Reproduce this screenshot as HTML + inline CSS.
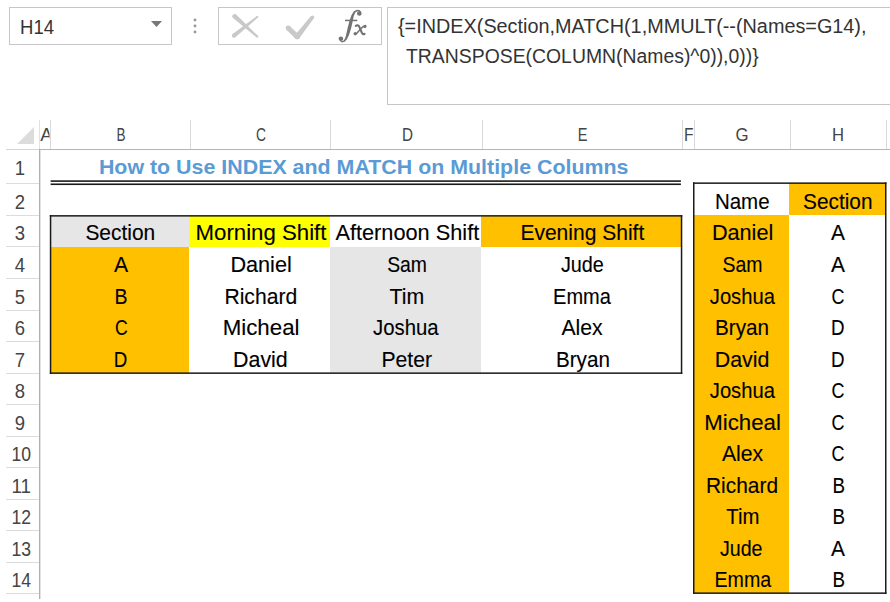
<!DOCTYPE html><html><head><meta charset="utf-8"><style>html,body{margin:0;padding:0;background:#fff;width:890px;height:602px;overflow:hidden}svg{display:block}text{font-family:"Liberation Sans",sans-serif}</style></head><body>
<svg width="890" height="602" viewBox="0 0 890 602">
<rect x="0" y="0" width="890" height="602" fill="#fff"/>
<rect x="9" y="7" width="163" height="1" fill="#c6c6c6" shape-rendering="crispEdges"/>
<rect x="9" y="44" width="163" height="1" fill="#c6c6c6" shape-rendering="crispEdges"/>
<rect x="9" y="7" width="1" height="38" fill="#c6c6c6" shape-rendering="crispEdges"/>
<rect x="171" y="7" width="1" height="38" fill="#c6c6c6" shape-rendering="crispEdges"/>
<text x="20.00" y="33.5" font-size="20" fill="#333" textLength="33.99" lengthAdjust="spacingAndGlyphs" >H14</text>
<path d="M151 21 L162 21 L156.5 27 Z" fill="#777"/>
<circle cx="195" cy="20" r="1.45" fill="#9a9a9a"/>
<circle cx="195" cy="26" r="1.45" fill="#9a9a9a"/>
<circle cx="195" cy="32" r="1.45" fill="#9a9a9a"/>
<rect x="218" y="7" width="164" height="1" fill="#c6c6c6" shape-rendering="crispEdges"/>
<rect x="218" y="44" width="164" height="1" fill="#c6c6c6" shape-rendering="crispEdges"/>
<rect x="218" y="7" width="1" height="38" fill="#c6c6c6" shape-rendering="crispEdges"/>
<rect x="381" y="7" width="1" height="38" fill="#c6c6c6" shape-rendering="crispEdges"/>
<path d="M233.06 17.91 L256.46 37.42 L257.94 35.78 L236.14 14.49 Z" fill="#c9c9c9"/>
<circle cx="234.6" cy="16.2" r="2.3" fill="#c9c9c9"/><circle cx="257.2" cy="36.6" r="1.1" fill="#c9c9c9"/>
<path d="M256.84 16.10 L232.62 33.88 L235.38 37.32 L257.96 17.50 Z" fill="#c9c9c9"/>
<circle cx="257.4" cy="16.8" r="0.9" fill="#c9c9c9"/><circle cx="234.0" cy="35.6" r="2.2" fill="#c9c9c9"/>
<path d="M286.47 29.81 L295.33 38.55 L299.07 34.65 L289.93 26.19 Z" fill="#c9c9c9"/>
<circle cx="288.2" cy="28.0" r="2.5" fill="#c9c9c9"/><circle cx="297.2" cy="36.6" r="2.7" fill="#c9c9c9"/>
<path d="M299.33 38.27 L313.82 18.31 L310.98 16.09 L295.07 34.93 Z" fill="#c9c9c9"/>
<circle cx="297.2" cy="36.6" r="2.7" fill="#c9c9c9"/><circle cx="312.4" cy="17.2" r="1.8" fill="#c9c9c9"/>
<path d="M361.05 11.80 L359.51 9.97 L356.80 9.63 L353.87 11.19 L351.43 15.17 L349.45 21.10 L347.75 27.58 L346.41 33.58 L345.26 38.03 L343.71 40.57 L342.04 41.15 L340.90 40.48 L340.30 41.52 L341.96 42.45 L344.69 41.83 L347.14 38.97 L349.19 34.42 L351.05 28.42 L352.55 21.90 L353.77 16.03 L355.33 12.41 L357.20 11.17 L358.89 11.23 L360.15 12.60 Z" fill="#737373"/>
<circle cx="359.3" cy="13.4" r="2.3" fill="#737373"/>
<circle cx="340.9" cy="38.7" r="2.3" fill="#737373"/>
<rect x="345" y="19.7" width="12.3" height="1.5" fill="#737373"/>
<path d="M355.8 25.8 C357.6 24.6 358.9 25.6 359.8 27.8 L361.8 32.6 C362.4 34 363.4 34.6 364.6 33.8" stroke="#737373" stroke-width="2.1" fill="none" stroke-linecap="round"/>
<path d="M365.6 25.6 C363.4 26 361 28.5 359.2 30.6 L356.6 33.4 C355.8 34.3 355 34.6 354.6 34.4" stroke="#737373" stroke-width="1.5" fill="none" stroke-linecap="round"/>
<circle cx="365" cy="26.4" r="1.5" fill="#737373"/>
<circle cx="355.2" cy="33.6" r="1.6" fill="#737373"/>
<rect x="387" y="7" width="503" height="1" fill="#c6c6c6" shape-rendering="crispEdges"/>
<rect x="387" y="104" width="503" height="1" fill="#c6c6c6" shape-rendering="crispEdges"/>
<rect x="387" y="7" width="1" height="98" fill="#c6c6c6" shape-rendering="crispEdges"/>
<text x="398.00" y="33" font-size="20" fill="#333" textLength="468.49" lengthAdjust="spacingAndGlyphs" >{=INDEX(Section,MATCH(1,MMULT(--(Names=G14),</text>
<text x="406.00" y="63.3" font-size="20" fill="#333" textLength="352.68" lengthAdjust="spacingAndGlyphs" >TRANSPOSE(COLUMN(Names)^0)),0))}</text>
<rect x="6" y="149" width="884" height="1" fill="#b4b4b4" shape-rendering="crispEdges"/>
<rect x="6" y="149" width="33" height="1" fill="#d4d4d4" shape-rendering="crispEdges"/>
<rect x="39" y="120" width="1" height="479" fill="#b0b0b0" shape-rendering="crispEdges"/>
<rect x="40" y="150" width="1" height="449" fill="#e2e2e2" shape-rendering="crispEdges"/>
<rect x="50" y="120" width="1" height="29" fill="#dadada" shape-rendering="crispEdges"/>
<rect x="190" y="120" width="1" height="29" fill="#dadada" shape-rendering="crispEdges"/>
<rect x="330" y="120" width="1" height="29" fill="#dadada" shape-rendering="crispEdges"/>
<rect x="482" y="120" width="1" height="29" fill="#dadada" shape-rendering="crispEdges"/>
<rect x="682" y="120" width="1" height="29" fill="#dadada" shape-rendering="crispEdges"/>
<rect x="694" y="120" width="1" height="29" fill="#dadada" shape-rendering="crispEdges"/>
<rect x="790" y="120" width="1" height="29" fill="#dadada" shape-rendering="crispEdges"/>
<rect x="886" y="120" width="1" height="29" fill="#dadada" shape-rendering="crispEdges"/>
<rect x="39" y="120" width="1" height="29" fill="#e0e0e0" shape-rendering="crispEdges"/>
<path d="M34 127 L34 144 L17 144 Z" fill="#dcdcdc"/>
<clipPath id="ca"><rect x="40" y="118" width="9.5" height="31"/></clipPath>
<clipPath id="cf"><rect x="683" y="118" width="11" height="31"/></clipPath>
<text x="40.30" y="141.4" font-size="19" fill="#444" textLength="12.35" lengthAdjust="spacingAndGlyphs" clip-path="url(#ca)">A</text>
<text x="116.50" y="141" font-size="19" fill="#444" textLength="9.03" lengthAdjust="spacingAndGlyphs" >B</text>
<text x="256.00" y="141" font-size="19" fill="#444" textLength="10.03" lengthAdjust="spacingAndGlyphs" >C</text>
<text x="402.00" y="141" font-size="19" fill="#444" textLength="11.03" lengthAdjust="spacingAndGlyphs" >D</text>
<text x="577.70" y="141" font-size="19" fill="#444" textLength="9.73" lengthAdjust="spacingAndGlyphs" >E</text>
<text x="735.50" y="141" font-size="19" fill="#444" textLength="13.06" lengthAdjust="spacingAndGlyphs" >G</text>
<text x="832.00" y="141" font-size="19" fill="#444" textLength="12.04" lengthAdjust="spacingAndGlyphs" >H</text>
<text x="684.00" y="141" font-size="19" fill="#444" textLength="9.51" lengthAdjust="spacingAndGlyphs" clip-path="url(#cf)">F</text>
<rect x="6" y="183" width="33" height="1" fill="#dcdcdc" shape-rendering="crispEdges"/>
<text x="14.66" y="174.5" font-size="19.5" fill="#444" textLength="10.30" lengthAdjust="spacingAndGlyphs" >1</text>
<rect x="6" y="215" width="33" height="1" fill="#dcdcdc" shape-rendering="crispEdges"/>
<text x="14.66" y="208.5" font-size="19.5" fill="#444" textLength="10.30" lengthAdjust="spacingAndGlyphs" >2</text>
<rect x="6" y="246" width="33" height="1" fill="#dcdcdc" shape-rendering="crispEdges"/>
<text x="14.66" y="240.0" font-size="19.5" fill="#444" textLength="10.30" lengthAdjust="spacingAndGlyphs" >3</text>
<rect x="6" y="278" width="33" height="1" fill="#dcdcdc" shape-rendering="crispEdges"/>
<text x="14.66" y="271.5" font-size="19.5" fill="#444" textLength="10.30" lengthAdjust="spacingAndGlyphs" >4</text>
<rect x="6" y="310" width="33" height="1" fill="#dcdcdc" shape-rendering="crispEdges"/>
<text x="14.66" y="303.5" font-size="19.5" fill="#444" textLength="10.30" lengthAdjust="spacingAndGlyphs" >5</text>
<rect x="6" y="341" width="33" height="1" fill="#dcdcdc" shape-rendering="crispEdges"/>
<text x="14.66" y="334.5" font-size="19.5" fill="#444" textLength="10.30" lengthAdjust="spacingAndGlyphs" >6</text>
<rect x="6" y="373" width="33" height="1" fill="#dcdcdc" shape-rendering="crispEdges"/>
<text x="14.66" y="366.5" font-size="19.5" fill="#444" textLength="10.30" lengthAdjust="spacingAndGlyphs" >7</text>
<rect x="6" y="404" width="33" height="1" fill="#dcdcdc" shape-rendering="crispEdges"/>
<text x="14.66" y="398.0" font-size="19.5" fill="#444" textLength="10.30" lengthAdjust="spacingAndGlyphs" >8</text>
<rect x="6" y="436" width="33" height="1" fill="#dcdcdc" shape-rendering="crispEdges"/>
<text x="14.66" y="429.5" font-size="19.5" fill="#444" textLength="10.30" lengthAdjust="spacingAndGlyphs" >9</text>
<rect x="6" y="467" width="33" height="1" fill="#dcdcdc" shape-rendering="crispEdges"/>
<text x="11.40" y="461.0" font-size="19.5" fill="#444" textLength="19.54" lengthAdjust="spacingAndGlyphs" >10</text>
<rect x="6" y="499" width="33" height="1" fill="#dcdcdc" shape-rendering="crispEdges"/>
<text x="11.40" y="492.5" font-size="19.5" fill="#444" textLength="19.46" lengthAdjust="spacingAndGlyphs" >11</text>
<rect x="6" y="530" width="33" height="1" fill="#dcdcdc" shape-rendering="crispEdges"/>
<text x="11.40" y="524.0" font-size="19.5" fill="#444" textLength="19.54" lengthAdjust="spacingAndGlyphs" >12</text>
<rect x="6" y="562" width="33" height="1" fill="#dcdcdc" shape-rendering="crispEdges"/>
<text x="11.40" y="555.5" font-size="19.5" fill="#444" textLength="19.54" lengthAdjust="spacingAndGlyphs" >13</text>
<rect x="6" y="593" width="33" height="1" fill="#dcdcdc" shape-rendering="crispEdges"/>
<text x="11.40" y="587.0" font-size="19.5" fill="#444" textLength="19.54" lengthAdjust="spacingAndGlyphs" >14</text>
<rect x="51" y="216" width="138" height="30.5" fill="#e6e6e6" shape-rendering="crispEdges"/>
<rect x="189" y="216" width="141" height="30.5" fill="#ffff00" shape-rendering="crispEdges"/>
<rect x="481" y="216" width="200" height="30.5" fill="#ffc000" shape-rendering="crispEdges"/>
<rect x="51" y="246.5" width="138" height="126" fill="#ffc000" shape-rendering="crispEdges"/>
<rect x="330" y="246.5" width="151" height="126" fill="#e6e6e6" shape-rendering="crispEdges"/>
<text x="98.90" y="174.3" font-size="21" fill="#5b9bd5" font-weight="bold" textLength="529.58" lengthAdjust="spacingAndGlyphs" >How to Use INDEX and MATCH on Multiple Columns</text>
<rect x="50.6" y="180.3" width="630.3" height="1.6" fill="#1a1a1a"/>
<rect x="50.6" y="183.45" width="630.3" height="1.6" fill="#1a1a1a"/>
<rect x="49.8" y="215.1" width="632.5" height="1.5" fill="#1a1a1a"/>
<rect x="49.8" y="372.4" width="632.5" height="1.5" fill="#1a1a1a"/>
<rect x="49.8" y="215.1" width="1.5" height="158.79999999999998" fill="#1a1a1a"/>
<rect x="680.8" y="215.1" width="1.5" height="158.79999999999998" fill="#1a1a1a"/>
<text x="85.40" y="240.2" font-size="21.5" fill="#000" stroke="#000" stroke-width="0.12" textLength="69.81" lengthAdjust="spacingAndGlyphs" >Section</text>
<text x="195.60" y="240.2" font-size="21.5" fill="#000" stroke="#000" stroke-width="0.12" textLength="130.84" lengthAdjust="spacingAndGlyphs" >Morning Shift</text>
<text x="335.40" y="240.2" font-size="21.5" fill="#000" stroke="#000" stroke-width="0.12" textLength="143.91" lengthAdjust="spacingAndGlyphs" >Afternoon Shift</text>
<text x="520.40" y="240.2" font-size="21.5" fill="#000" stroke="#000" stroke-width="0.12" textLength="123.85" lengthAdjust="spacingAndGlyphs" >Evening Shift</text>
<text x="114.00" y="271.6" font-size="21.5" fill="#000" stroke="#000" stroke-width="0.12" textLength="14.14" lengthAdjust="spacingAndGlyphs" >A</text>
<text x="230.40" y="271.6" font-size="21.5" fill="#000" stroke="#000" stroke-width="0.12" textLength="61.40" lengthAdjust="spacingAndGlyphs" >Daniel</text>
<text x="387.20" y="271.6" font-size="21.5" fill="#000" stroke="#000" stroke-width="0.12" textLength="39.82" lengthAdjust="spacingAndGlyphs" >Sam</text>
<text x="560.90" y="271.6" font-size="21.5" fill="#000" stroke="#000" stroke-width="0.12" textLength="42.97" lengthAdjust="spacingAndGlyphs" >Jude</text>
<text x="114.50" y="303.6" font-size="21.5" fill="#000" stroke="#000" stroke-width="0.12" textLength="13.04" lengthAdjust="spacingAndGlyphs" >B</text>
<text x="224.40" y="303.6" font-size="21.5" fill="#000" stroke="#000" stroke-width="0.12" textLength="72.82" lengthAdjust="spacingAndGlyphs" >Richard</text>
<text x="389.50" y="303.6" font-size="21.5" fill="#000" stroke="#000" stroke-width="0.12" textLength="34.68" lengthAdjust="spacingAndGlyphs" >Tim</text>
<text x="553.10" y="303.6" font-size="21.5" fill="#000" stroke="#000" stroke-width="0.12" textLength="57.79" lengthAdjust="spacingAndGlyphs" >Emma</text>
<text x="115.00" y="334.6" font-size="21.5" fill="#000" stroke="#000" stroke-width="0.12" textLength="12.74" lengthAdjust="spacingAndGlyphs" >C</text>
<text x="222.70" y="334.6" font-size="21.5" fill="#000" stroke="#000" stroke-width="0.12" textLength="76.82" lengthAdjust="spacingAndGlyphs" >Micheal</text>
<text x="373.00" y="334.6" font-size="21.5" fill="#000" stroke="#000" stroke-width="0.12" textLength="65.59" lengthAdjust="spacingAndGlyphs" >Joshua</text>
<text x="561.40" y="334.6" font-size="21.5" fill="#000" stroke="#000" stroke-width="0.12" textLength="41.31" lengthAdjust="spacingAndGlyphs" >Alex</text>
<text x="113.70" y="366.6" font-size="21.5" fill="#000" stroke="#000" stroke-width="0.12" textLength="13.54" lengthAdjust="spacingAndGlyphs" >D</text>
<text x="233.10" y="366.6" font-size="21.5" fill="#000" stroke="#000" stroke-width="0.12" textLength="54.64" lengthAdjust="spacingAndGlyphs" >David</text>
<text x="381.40" y="366.6" font-size="21.5" fill="#000" stroke="#000" stroke-width="0.12" textLength="50.60" lengthAdjust="spacingAndGlyphs" >Peter</text>
<text x="556.00" y="366.6" font-size="21.5" fill="#000" stroke="#000" stroke-width="0.12" textLength="53.85" lengthAdjust="spacingAndGlyphs" >Bryan</text>
<rect x="789" y="183" width="97" height="32" fill="#ffc000" shape-rendering="crispEdges"/>
<rect x="693" y="215" width="96" height="378" fill="#ffc000" shape-rendering="crispEdges"/>
<rect x="693" y="182.4" width="193.5" height="1.5" fill="#1a1a1a"/>
<rect x="693" y="592.4" width="193.5" height="1.5" fill="#1a1a1a"/>
<rect x="693" y="182.4" width="1.5" height="411.5" fill="#1a1a1a"/>
<rect x="885" y="182.4" width="1.5" height="411.5" fill="#1a1a1a"/>
<text x="714.90" y="208.7" font-size="21.5" fill="#000" stroke="#000" stroke-width="0.12" textLength="54.75" lengthAdjust="spacingAndGlyphs" >Name</text>
<text x="803.00" y="208.7" font-size="21.5" fill="#000" stroke="#000" stroke-width="0.12" textLength="69.51" lengthAdjust="spacingAndGlyphs" >Section</text>
<text x="711.90" y="240.1" font-size="21.5" fill="#000" stroke="#000" stroke-width="0.12" textLength="61.40" lengthAdjust="spacingAndGlyphs" >Daniel</text>
<text x="831.00" y="240.1" font-size="21.5" fill="#000" stroke="#000" stroke-width="0.12" textLength="13.94" lengthAdjust="spacingAndGlyphs" >A</text>
<text x="722.50" y="271.6" font-size="21.5" fill="#000" stroke="#000" stroke-width="0.12" textLength="40.02" lengthAdjust="spacingAndGlyphs" >Sam</text>
<text x="831.00" y="271.6" font-size="21.5" fill="#000" stroke="#000" stroke-width="0.12" textLength="13.94" lengthAdjust="spacingAndGlyphs" >A</text>
<text x="709.80" y="303.6" font-size="21.5" fill="#000" stroke="#000" stroke-width="0.12" textLength="65.09" lengthAdjust="spacingAndGlyphs" >Joshua</text>
<text x="831.40" y="303.6" font-size="21.5" fill="#000" stroke="#000" stroke-width="0.12" textLength="12.94" lengthAdjust="spacingAndGlyphs" >C</text>
<text x="715.00" y="334.6" font-size="21.5" fill="#000" stroke="#000" stroke-width="0.12" textLength="54.05" lengthAdjust="spacingAndGlyphs" >Bryan</text>
<text x="831.00" y="334.6" font-size="21.5" fill="#000" stroke="#000" stroke-width="0.12" textLength="13.54" lengthAdjust="spacingAndGlyphs" >D</text>
<text x="714.80" y="366.6" font-size="21.5" fill="#000" stroke="#000" stroke-width="0.12" textLength="54.64" lengthAdjust="spacingAndGlyphs" >David</text>
<text x="831.00" y="366.6" font-size="21.5" fill="#000" stroke="#000" stroke-width="0.12" textLength="13.54" lengthAdjust="spacingAndGlyphs" >D</text>
<text x="709.80" y="398.1" font-size="21.5" fill="#000" stroke="#000" stroke-width="0.12" textLength="65.09" lengthAdjust="spacingAndGlyphs" >Joshua</text>
<text x="831.40" y="398.1" font-size="21.5" fill="#000" stroke="#000" stroke-width="0.12" textLength="12.94" lengthAdjust="spacingAndGlyphs" >C</text>
<text x="704.20" y="429.6" font-size="21.5" fill="#000" stroke="#000" stroke-width="0.12" textLength="76.72" lengthAdjust="spacingAndGlyphs" >Micheal</text>
<text x="831.40" y="429.6" font-size="21.5" fill="#000" stroke="#000" stroke-width="0.12" textLength="12.94" lengthAdjust="spacingAndGlyphs" >C</text>
<text x="721.90" y="461.1" font-size="21.5" fill="#000" stroke="#000" stroke-width="0.12" textLength="41.31" lengthAdjust="spacingAndGlyphs" >Alex</text>
<text x="831.40" y="461.1" font-size="21.5" fill="#000" stroke="#000" stroke-width="0.12" textLength="12.94" lengthAdjust="spacingAndGlyphs" >C</text>
<text x="706.00" y="492.6" font-size="21.5" fill="#000" stroke="#000" stroke-width="0.12" textLength="72.02" lengthAdjust="spacingAndGlyphs" >Richard</text>
<text x="832.50" y="492.6" font-size="21.5" fill="#000" stroke="#000" stroke-width="0.12" textLength="12.54" lengthAdjust="spacingAndGlyphs" >B</text>
<text x="726.30" y="524.1" font-size="21.5" fill="#000" stroke="#000" stroke-width="0.12" textLength="33.18" lengthAdjust="spacingAndGlyphs" >Tim</text>
<text x="832.50" y="524.1" font-size="21.5" fill="#000" stroke="#000" stroke-width="0.12" textLength="12.54" lengthAdjust="spacingAndGlyphs" >B</text>
<text x="720.00" y="555.6" font-size="21.5" fill="#000" stroke="#000" stroke-width="0.12" textLength="42.47" lengthAdjust="spacingAndGlyphs" >Jude</text>
<text x="831.00" y="555.6" font-size="21.5" fill="#000" stroke="#000" stroke-width="0.12" textLength="13.94" lengthAdjust="spacingAndGlyphs" >A</text>
<text x="714.50" y="587.1" font-size="21.5" fill="#000" stroke="#000" stroke-width="0.12" textLength="56.69" lengthAdjust="spacingAndGlyphs" >Emma</text>
<text x="832.50" y="587.1" font-size="21.5" fill="#000" stroke="#000" stroke-width="0.12" textLength="12.54" lengthAdjust="spacingAndGlyphs" >B</text>
</svg></body></html>
